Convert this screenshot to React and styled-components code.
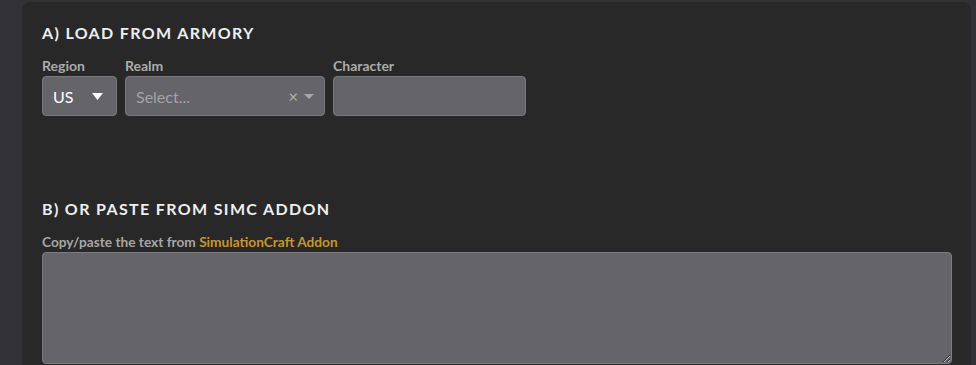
import React from "react";
import styled, { createGlobalStyle } from "styled-components";

const Global = createGlobalStyle`
  html, body { margin: 0; padding: 0; overflow: hidden; background: #313136; }
  body { font-family: Lato, "Open Sans", sans-serif; }
  * { box-sizing: border-box; }
`;

const Page = styled.div`
  padding: 2px 5px 0 22px;
  height: 365px;
`;

const Panel = styled.div`
  background: #282828;
  border-radius: 8px 8px 0 0;
  padding: 21px 19px 0 20px;
  height: 400px;
`;

const Section = styled.section`
  margin-bottom: ${(p) => p.$gap || 0}px;
`;

const Heading = styled.h2`
  margin: 0 0 14px;
  font-size: 16px;
  font-weight: 700;
  letter-spacing: 1.35px;
  color: #eeeeee;
  line-height: 20px;
  text-transform: uppercase;
`;

const FieldRow = styled.div`
  display: flex;
  gap: 8px;
`;

const Field = styled.label`
  display: flex;
  flex-direction: column;
  gap: 2px;
  width: ${(p) => p.$w}px;
`;

const Label = styled.span`
  font-size: 14px;
  font-weight: 700;
  color: #acacac;
  line-height: 17px;
`;

const Box = styled.div`
  height: 40px;
  background: #656469;
  border: 1px solid #79787d;
  border-radius: 4px;
  display: flex;
  align-items: center;
  padding: 0 ${(p) => p.$pr || 10}px 0 10px;
  font-size: 16px;
  color: ${(p) => (p.$placeholder ? "#a3a3a6" : "#ffffff")};
`;

const Grow = styled.span`
  flex: 1;
`;

const Clear = styled.span`
  color: #b0b0b3;
  font-size: 17px;
  margin-right: 6px;
  line-height: 1;
`;

const Caret = styled.svg`
  display: block;
`;

const Hint = styled.div`
  font-size: 13.7px;
  font-weight: 700;
  color: #a6a6a6;
  line-height: 17px;
  margin-bottom: 2px;
  margin-top: 2px;
`;

const Link = styled.a`
  color: #c5952f;
  text-decoration: none;
`;

const Area = styled.textarea`
  display: block;
  width: 100%;
  height: 112px;
  background: #656469;
  border: 1px solid #7c7b80;
  border-radius: 4px;
  color: #fff;
  resize: vertical;
  outline: none;
`;

export default function App() {
  return (
    <>
      <Global />
      <Page>
        <Panel>
          <Section $gap={83}>
            <Heading>A) Load from Armory</Heading>
            <FieldRow>
              <Field $w={75}>
                <Label>Region</Label>
                <Box $pr={13}>
                  <Grow>US</Grow>
                  <Caret width="11" height="7" viewBox="0 0 11 7">
                    <path d="M0 0 H11 L5.5 7 Z" fill="#ffffff" />
                  </Caret>
                </Box>
              </Field>
              <Field $w={200}>
                <Label>Realm</Label>
                <Box $placeholder $pr={10}>
                  <Grow>Select...</Grow>
                  <Clear>×</Clear>
                  <Caret width="10" height="5" viewBox="0 0 10 5">
                    <path d="M0 0 H10 L5 5 Z" fill="#a8a8ab" />
                  </Caret>
                </Box>
              </Field>
              <Field $w={193}>
                <Label>Character</Label>
                <Box />
              </Field>
            </FieldRow>
          </Section>
          <Section>
            <Heading>B) Or paste from SimC addon</Heading>
            <Hint>
              Copy/paste the text from <Link>SimulationCraft Addon</Link>
            </Hint>
            <Area />
          </Section>
        </Panel>
      </Page>
    </>
  );
}
